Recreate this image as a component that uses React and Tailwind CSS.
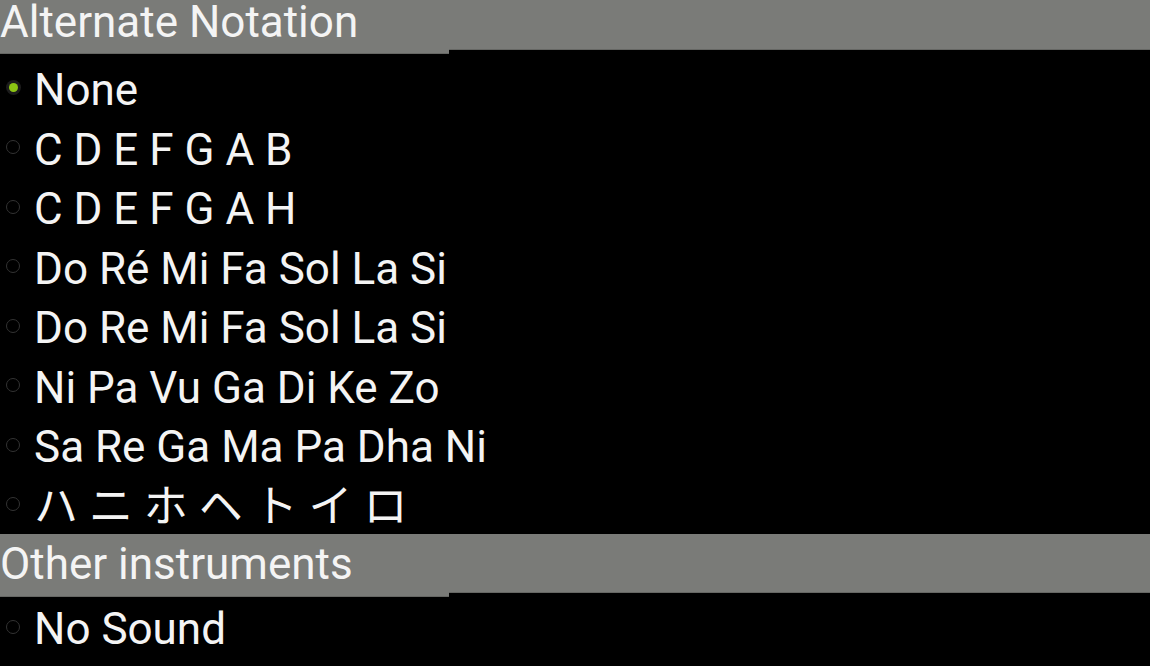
import React from "react";

const notations = [
  { label: "None", selected: true },
  { label: "C D E F G A B" },
  { label: "C D E F G A H" },
  { label: "Do Ré Mi Fa Sol La Si" },
  { label: "Do Re Mi Fa Sol La Si" },
  { label: "Ni Pa Vu Ga Di Ke Zo" },
  { label: "Sa Re Ga Ma Pa Dha Ni" },
  { label: "ハ ニ ホ ヘ ト イ ロ" },
];

function Header({ children, first = false }) {
  return (
    <div className={"flex items-start shrink-0 " + (first ? "h-[54px] mb-[4px]" : "h-[63px]")}>
      <div
        className={
          "w-[449px] bg-[#7a7b78] border-b border-[#666764] whitespace-nowrap text-[44px] leading-none text-[#f4f4f4] " +
          (first ? "h-[54px] pt-0" : "h-[63px] pt-[8px]")
        }
      >
        {children}
      </div>
      <div className={"flex-1 bg-[#7a7b78] border-b border-[#666764] " + (first ? "h-[50px]" : "h-[59px]")} />
    </div>
  );
}

function Radio({ selected }) {
  return selected ? (
    <div className="w-[15px] h-[15px] rounded-full bg-[#1c1c1c] flex items-center justify-center">
      <div className="w-[9px] h-[9px] rounded-full bg-[#8cc414]" />
    </div>
  ) : (
    <div className="w-[14px] h-[14px] rounded-full border border-[#333333]" />
  );
}

function Row({ label, selected }) {
  return (
    <div className="flex h-[59.5px] shrink-0">
      <div className="w-[34px] flex items-center pl-[6px]">
        <Radio selected={selected} />
      </div>
      <div className="mt-[10px] text-[44px] leading-none text-[#f4f4f4] whitespace-nowrap">
        {label}
      </div>
    </div>
  );
}

export default function App() {
  return (
    <div
      className="w-[1150px] h-[666px] bg-black overflow-hidden flex flex-col"
      style={{ fontFamily: 'Roboto, "Noto Sans CJK JP", sans-serif' }}
    >
      <Header first>Alternate Notation</Header>
      {notations.map((n) => (
        <Row key={n.label} {...n} />
      ))}
      <Header>Other instruments</Header>
      <Row label="No Sound" />
    </div>
  );
}
